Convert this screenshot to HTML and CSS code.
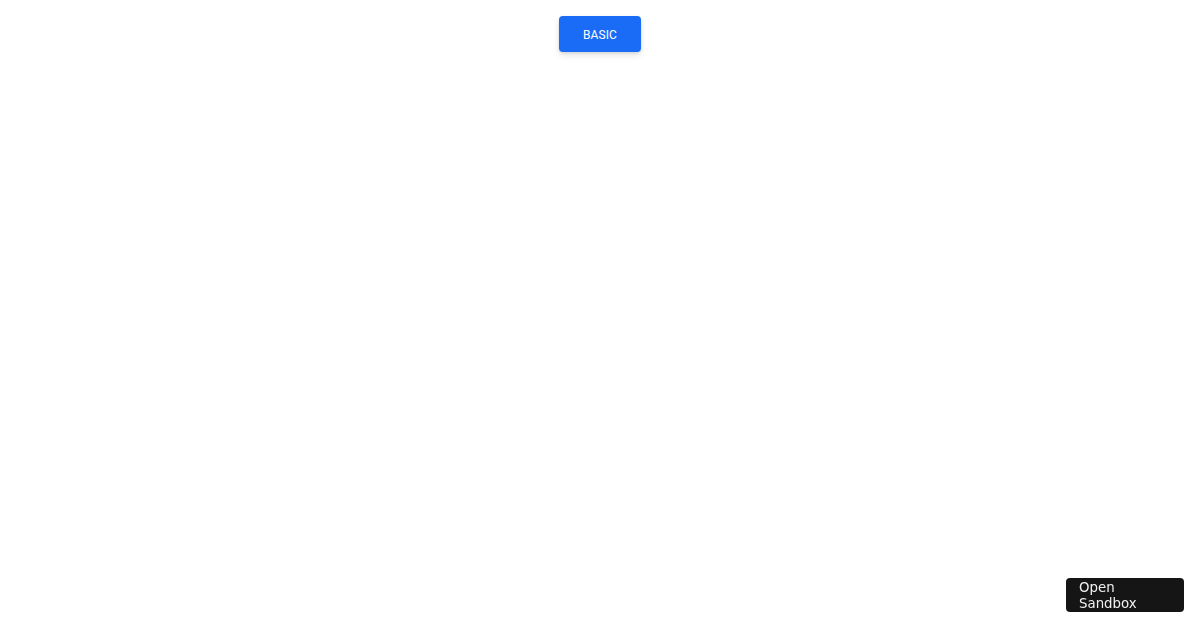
FILE: index.html
```html
<!DOCTYPE html>
<html>
<head>
<meta charset="utf-8">
<link rel="stylesheet" href="styles.css">
</head>
<body>
<main class="stage">
  <button class="btn">BASIC</button>
</main>
<a class="sandbox">Open Sandbox</a>
</body>
</html>
```
FILE: styles.css
```css
html, body {
  margin: 0;
  padding: 0;
  background: #ffffff;
  height: 100%;
}
.stage {
  display: flex;
  justify-content: center;
  padding-top: 16px;
}
.btn {
  width: 82px;
  height: 36px;
  padding: 2px 0 0;
  border: none;
  border-radius: 4px;
  background: #1a6cf7;
  color: #ffffff;
  font-family: Roboto, "Liberation Sans", sans-serif;
  font-size: 12px;
  font-weight: 400;
  letter-spacing: 0.1px;
  box-shadow: 0 3px 6px rgba(0,0,0,0.12), 0 1px 3px rgba(0,0,0,0.08);
  cursor: pointer;
}
.sandbox {
  position: fixed;
  right: 16px;
  bottom: 18px;
  width: 118px;
  box-sizing: border-box;
  padding: 2px 13px 0;
  background: #151515;
  color: #f0f0f0;
  border-radius: 4px;
  font-family: "DejaVu Sans", Verdana, sans-serif;
  font-size: 13.33px;
  line-height: 16px;
}
```
